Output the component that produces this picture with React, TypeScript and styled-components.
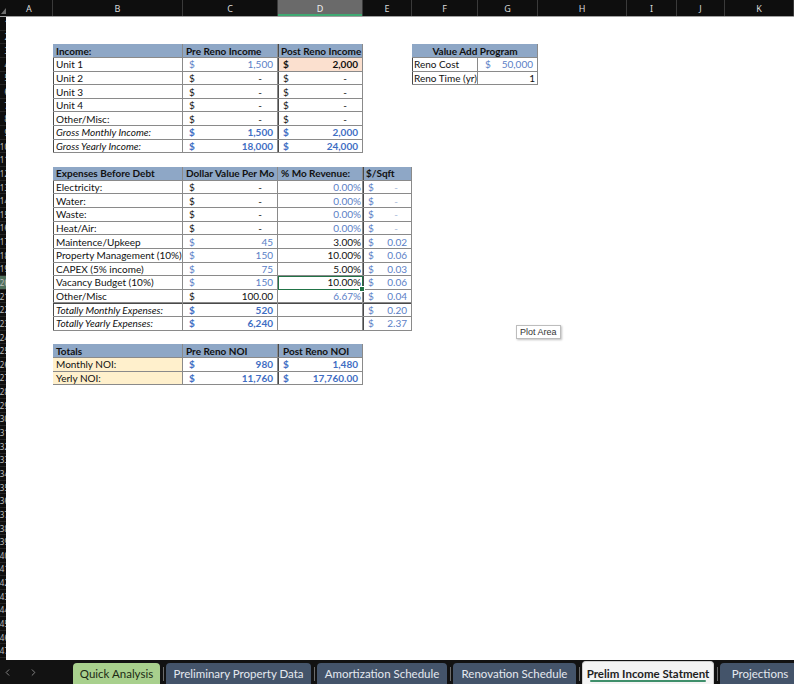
import React from "react";
import styled, { createGlobalStyle, css } from "styled-components";
import { ChevronLeft, ChevronRight } from "lucide-react";

const GlobalStyle = createGlobalStyle`
  html, body { margin: 0; padding: 0; background: #0e0e0e; }
  body { font-family: Lato, "Liberation Sans", sans-serif; }
  * { box-sizing: border-box; }
`;

const ROW_H = 13.65;
const COLS = [47, 130, 95, 85, 49, 66, 60, 89, 50, 48, 69];
const LETTERS = "ABCDEFGHIJK".split("");
const SELECTED_COL = "D";
const SELECTED_ROW = 20;

const HEAD_BG = "#8ea7c6";
const BLUE = "#3f6ec3";
const SOFT = "#5b80c6";
const PALE = "#a8b8d8";
const LINE = "#8a8a8a";
const EDGE = "#4a4a4a";

const Window = styled.div`
  width: 794px;
  height: 684px;
  display: flex;
  flex-direction: column;
  overflow: hidden;
  background: #0e0e0e;
`;

const ColumnBar = styled.div`
  height: 17px;
  display: flex;
  flex-shrink: 0;
  border-bottom: 1px solid #a0a0a0;
`;

const Corner = styled.div`
  width: 6px;
  flex-shrink: 0;
  position: relative;
  &::after {
    content: "";
    position: absolute;
    right: 0;
    bottom: 2px;
    border-left: 5px solid transparent;
    border-bottom: 6px solid #6e6e6e;
  }
`;

const ColHead = styled.div<{ $w: number; $selected?: boolean }>`
  width: ${(p) => p.$w}px;
  flex-shrink: 0;
  display: flex;
  align-items: center;
  justify-content: center;
  font-family: "Noto Sans", sans-serif;
  font-size: 9px;
  color: #dadada;
  border-right: 1px solid #3a3a3a;
  ${(p) =>
    p.$selected &&
    css`
      background: #6a6a6a;
      color: #f0f0f0;
      box-shadow: inset 0 -2px 0 #3fa872;
    `}
`;

const Body = styled.div`
  flex: 1;
  display: flex;
  min-height: 0;
`;

const RowStrip = styled.div`
  width: 6px;
  flex-shrink: 0;
  display: flex;
  flex-direction: column;
  overflow: hidden;
`;

const RowNum = styled.div<{ $selected?: boolean }>`
  height: ${ROW_H}px;
  flex-shrink: 0;
  display: flex;
  align-items: center;
  justify-content: flex-end;
  margin-right: -3px;
  font-family: "Noto Sans", sans-serif;
  font-size: 8px;
  color: #bdbdbd;
  border-bottom: 1px solid #262626;
  background: ${(p) => (p.$selected ? "#4f6f5b" : "transparent")};
`;

const Sheet = styled.div`
  flex: 1;
  position: relative;
  background: #ffffff;
  display: grid;
  grid-template-columns: ${COLS.slice(0, -1).map((w) => `${w}px`).join(" ")} 1fr;
  grid-auto-rows: ${ROW_H}px;
  align-content: start;
  overflow: hidden;
`;

const Block = styled.div<{ $col: string; $row: string; $cols: number[] }>`
  grid-column: ${(p) => p.$col};
  grid-row: ${(p) => p.$row};
  display: grid;
  grid-template-columns: ${(p) => p.$cols.map((w) => `${w}px`).join(" ")};
  grid-auto-rows: ${ROW_H}px;
  outline: 1px solid ${EDGE};
  outline-offset: -1px;
`;

type Tone = "black" | "blue" | "soft" | "pale";
const toneColor = (t?: Tone) =>
  t === "blue" ? BLUE : t === "soft" ? SOFT : t === "pale" ? PALE : "#111";

const Cell = styled.div<{
  $bg?: string;
  $tone?: Tone;
  $bold?: boolean;
  $italic?: boolean;
  $justify?: string;
  $sep?: boolean;
  $top?: boolean;
  $selected?: boolean;
  $pl?: number;
  $pr?: number;
  $span?: number;
}>`
  position: relative;
  display: flex;
  align-items: center;
  justify-content: ${(p) => p.$justify ?? "flex-start"};
  grid-column: ${(p) => (p.$span ? `span ${p.$span}` : "auto")};
  padding: 0 ${(p) => p.$pr ?? 2}px 0 ${(p) => p.$pl ?? 3}px;
  font-size: 10px;
  line-height: 1;
  white-space: nowrap;
  overflow: hidden;
  color: ${(p) => toneColor(p.$tone)};
  font-weight: ${(p) => (p.$bold ? 700 : 400)};
  font-style: ${(p) => (p.$italic ? "italic" : "normal")};
  background: ${(p) => p.$bg ?? "transparent"};
  border-right: 1px solid ${LINE};
  border-bottom: 1px solid ${LINE};
  box-shadow: ${(p) =>
    [p.$sep ? `inset 1px 0 0 ${EDGE}` : "", p.$top ? `inset 0 1px 0 ${EDGE}` : ""]
      .filter(Boolean)
      .join(", ") || "none"};
  ${(p) =>
    p.$selected &&
    css`
      overflow: visible;
      outline: 1.5px solid #217346;
      outline-offset: -1.5px;
      z-index: 1;
      &::after {
        content: "";
        position: absolute;
        right: -3px;
        bottom: -3px;
        width: 4px;
        height: 4px;
        background: #217346;
        border: 1px solid #fff;
      }
    `}
`;

const Dash = styled.span<{ $tone?: Tone }>`
  color: ${(p) => toneColor(p.$tone)};
  padding-right: 3px;
`;

type Spec = {
  text?: string;
  money?: string;
  tone?: Tone;
  dashTone?: Tone;
  bold?: boolean;
  italic?: boolean;
  right?: boolean;
  center?: boolean;
  bg?: string;
  sep?: boolean;
  top?: boolean;
  selected?: boolean;
  span?: number;
  pl?: number;
  pr?: number;
};

function SheetCell({ s }: { s: Spec }) {
  if (s.money !== undefined) {
    const isDash = s.money === "-";
    return (
      <Cell
        $tone={s.tone}
        $bold={s.bold}
        $bg={s.bg}
        $sep={s.sep}
        $top={s.top}
        $justify="space-between"
        $pl={s.pl ?? 5}
        $pr={s.pr ?? 4}
      >
        <span>$</span>
        {isDash ? <Dash $tone={s.dashTone ?? s.tone}>-</Dash> : <span>{s.money}</span>}
      </Cell>
    );
  }
  return (
    <Cell
      $tone={s.tone}
      $bold={s.bold}
      $italic={s.italic}
      $bg={s.bg}
      $sep={s.sep}
      $top={s.top}
      $selected={s.selected}
      $span={s.span}
      $justify={s.center ? "center" : s.right ? "flex-end" : "flex-start"}
      $pl={s.pl}
      $pr={s.pr}
    >
      {s.text}
    </Cell>
  );
}

const head = (text: string, extra: Partial<Spec> = {}): Spec => ({
  text,
  bold: true,
  bg: HEAD_BG,
  ...extra,
});

const incomeRows: Spec[][] = [
  [head("Income:"), head("Pre Reno Income"), head("Post Reno Income", { sep: true })],
  [
    { text: "Unit 1" },
    { money: "1,500", tone: "soft", pl: 6 },
    { money: "2,000", bold: true, bg: "#fbe0cf", sep: true },
  ],
  ...["Unit 2", "Unit 3", "Unit 4", "Other/Misc:"].map((t) => [
    { text: t },
    { money: "-", pl: 6, pr: 12 },
    { money: "-", sep: true, pr: 12 },
  ]),
  [
    { text: "Gross Monthly Income:", italic: true },
    { money: "1,500", tone: "blue", bold: true, pl: 6 },
    { money: "2,000", tone: "blue", bold: true, sep: true },
  ],
  [
    { text: "Gross Yearly Income:", italic: true },
    { money: "18,000", tone: "blue", bold: true, pl: 6 },
    { money: "24,000", tone: "blue", bold: true, sep: true },
  ],
];

const valueRows: Spec[][] = [
  [head("Value Add Program", { center: true, span: 2 })],
  [{ text: "Reno Cost", pl: 2 }, { money: "50,000", tone: "soft", pl: 7 }],
  [{ text: "Reno Time (yr)", pl: 2, pr: 0 }, { text: "1", right: true }],
];

const emptyExpense = (t: string): Spec[] => [
  { text: t },
  { money: "-", pl: 6, pr: 12 },
  { text: "0.00%", tone: "soft", right: true, pr: 1 },
  { money: "-", tone: "soft", dashTone: "pale", sep: true, pr: 10 },
];

const expense = (t: string, v: string, pct: string, sq: string, selected = false): Spec[] => [
  { text: t },
  { money: v, tone: "soft", pl: 6 },
  { text: pct, right: true, pr: 1, selected },
  { money: sq, tone: "soft", sep: true },
];

const expenseRows: Spec[][] = [
  [
    head("Expenses Before Debt"),
    head("Dollar Value Per Mo"),
    head("% Mo Revenue:"),
    head("$/Sqft", { sep: true }),
  ],
  emptyExpense("Electricity:"),
  emptyExpense("Water:"),
  emptyExpense("Waste:"),
  emptyExpense("Heat/Air:"),
  expense("Maintence/Upkeep", "45", "3.00%", "0.02"),
  expense("Property Management (10%)", "150", "10.00%", "0.06"),
  expense("CAPEX (5% income)", "75", "5.00%", "0.03"),
  expense("Vacancy Budget (10%)", "150", "10.00%", "0.06", true),
  [
    { text: "Other/Misc" },
    { money: "100.00", pl: 6 },
    { text: "6.67%", tone: "soft", right: true, pr: 1 },
    { money: "0.04", tone: "soft", sep: true },
  ],
  [
    { text: "Totally Monthly Expenses:", italic: true, top: true },
    { money: "520", tone: "blue", bold: true, top: true, pl: 6 },
    { text: "", top: true },
    { money: "0.20", tone: "soft", sep: true, top: true },
  ],
  [
    { text: "Totally Yearly Expenses:", italic: true },
    { money: "6,240", tone: "blue", bold: true, pl: 6 },
    { text: "" },
    { money: "2.37", tone: "soft", sep: true },
  ],
];

const totalRows: Spec[][] = [
  [head("Totals"), head("Pre Reno NOI"), head("Post Reno NOI", { sep: true, pl: 5 })],
  [
    { text: "Monthly NOI:", bg: "#fff0cc" },
    { money: "980", tone: "blue", bold: true, pl: 6 },
    { money: "1,480", tone: "blue", bold: true, sep: true },
  ],
  [
    { text: "Yerly NOI:", bg: "#fff0cc" },
    { money: "11,760", tone: "blue", bold: true, pl: 6 },
    { money: "17,760.00", tone: "blue", bold: true, sep: true },
  ],
];

function Table({ col, row, cols, rows }: { col: string; row: string; cols: number[]; rows: Spec[][] }) {
  return (
    <Block $col={col} $row={row} $cols={cols}>
      {rows.flatMap((r, i) => r.map((s, j) => <SheetCell key={`${i}-${j}`} s={s} />))}
    </Block>
  );
}

const PlotArea = styled.div`
  position: absolute;
  left: 510px;
  top: 308px;
  padding: 1px 3px;
  font-family: "Liberation Sans", sans-serif;
  font-size: 9px;
  color: #333;
  background: #fff;
  border: 1px solid #bdbdbd;
  box-shadow: 1px 1px 2px rgba(0, 0, 0, 0.25);
`;

const TabBar = styled.div`
  height: 24px;
  flex-shrink: 0;
  display: flex;
  align-items: flex-end;
  background: #121212;
`;

const Arrows = styled.div`
  width: 73px;
  flex-shrink: 0;
  height: 100%;
  display: flex;
  align-items: center;
  gap: 15px;
  padding-left: 2px;
  color: #8a8a8a;
`;

type TabKind = "green" | "slate" | "active";

const Tab = styled.div<{ $w: number; $kind: TabKind }>`
  width: ${(p) => p.$w}px;
  flex-shrink: 0;
  height: ${(p) => (p.$kind === "active" ? 23 : 21)}px;
  display: flex;
  align-items: center;
  justify-content: center;
  position: relative;
  border-radius: 4px 4px 0 0;
  font-family: Lato, "Noto Sans", sans-serif;
  font-size: 11.5px;
  white-space: nowrap;
  overflow: hidden;
  ${(p) =>
    p.$kind === "green"
      ? css`
          background: #a8d08d;
          color: #1c2a14;
        `
      : p.$kind === "slate"
      ? css`
          background: #44546a;
          color: #e4e9f0;
        `
      : css`
          background: #f4f4f4;
          color: #1e1e1e;
          font-weight: 700;
          border: 1px solid #cfcfcf;
          border-bottom: none;
        `}
`;

const Underline = styled.span`
  position: absolute;
  left: 7px;
  right: 7px;
  bottom: 2px;
  height: 2px;
  background: #3f8f6b;
  border-radius: 1px;
`;

const TabSep = styled.div`
  width: 6px;
  flex-shrink: 0;
  height: 21px;
  display: flex;
  justify-content: center;
  align-items: center;
  &::before {
    content: "";
    width: 1px;
    height: 14px;
    background: #6a6a6a;
  }
`;

const tabs: { label: string; w: number; kind: TabKind }[] = [
  { label: "Quick Analysis", w: 87, kind: "green" },
  { label: "Preliminary Property Data", w: 145, kind: "slate" },
  { label: "Amortization Schedule", w: 130, kind: "slate" },
  { label: "Renovation Schedule", w: 123, kind: "slate" },
  { label: "Prelim Income Statment", w: 132, kind: "active" },
  { label: "Projections", w: 80, kind: "slate" },
];

export default function App() {
  const rowNums = Array.from({ length: 48 }, (_, i) => i + 1);
  return (
    <>
      <GlobalStyle />
      <Window>
        <ColumnBar>
          <Corner />
          {LETTERS.map((l, i) => (
            <ColHead key={l} $w={COLS[i]} $selected={l === SELECTED_COL}>
              {l}
            </ColHead>
          ))}
        </ColumnBar>
        <Body>
          <RowStrip>
            {rowNums.map((n) => (
              <RowNum key={n} $selected={n === SELECTED_ROW}>
                {n}
              </RowNum>
            ))}
          </RowStrip>
          <Sheet>
            <Table col="2 / 5" row="3 / 11" cols={[130, 95, 85]} rows={incomeRows} />
            <Table col="6 / 8" row="3 / 6" cols={[66, 60]} rows={valueRows} />
            <Table col="2 / 6" row="12 / 24" cols={[130, 95, 85, 49]} rows={expenseRows} />
            <Table col="2 / 5" row="25 / 28" cols={[130, 95, 85]} rows={totalRows} />
            <PlotArea>Plot Area</PlotArea>
          </Sheet>
        </Body>
        <TabBar>
          <Arrows>
            <ChevronLeft size={11} />
            <ChevronRight size={11} />
          </Arrows>
          {tabs.map((t, i) => (
            <React.Fragment key={t.label}>
              {i > 0 && <TabSep />}
              <Tab $w={t.w} $kind={t.kind}>
                {t.label}
                {t.kind === "active" && <Underline />}
              </Tab>
            </React.Fragment>
          ))}
        </TabBar>
      </Window>
    </>
  );
}
